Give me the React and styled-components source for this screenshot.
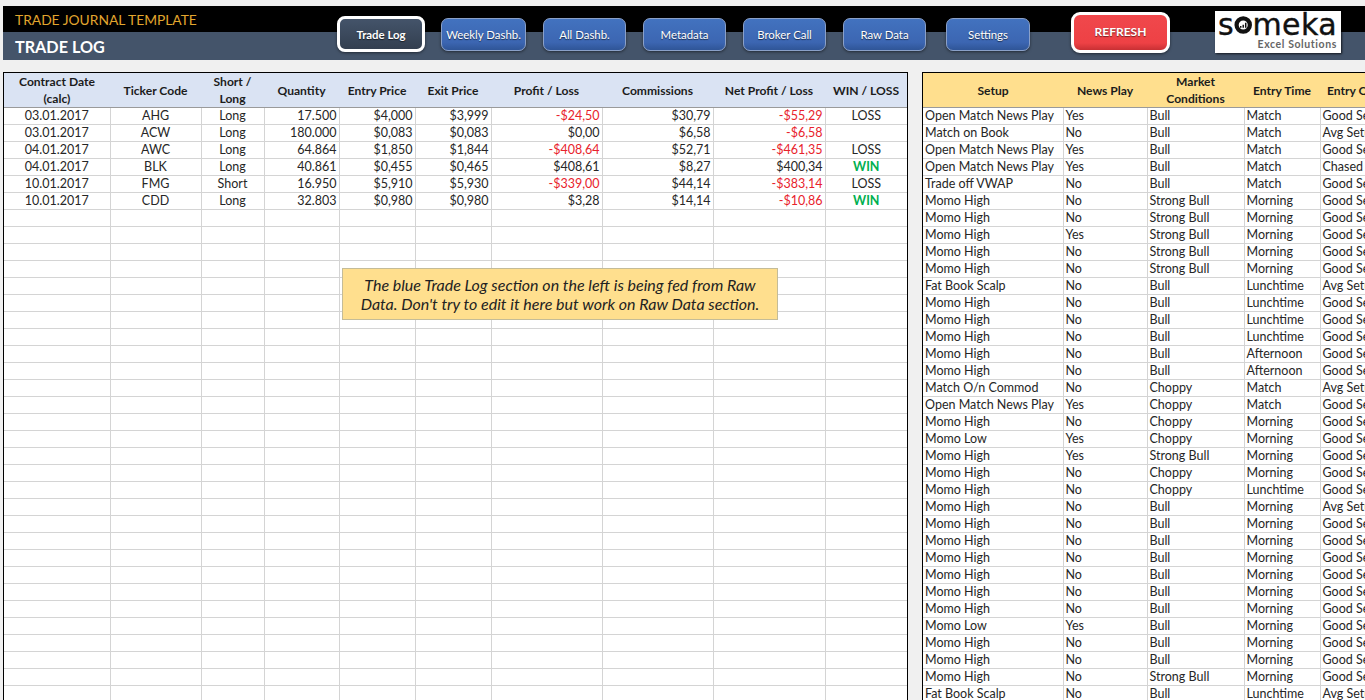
import React from "react";
import styled, { createGlobalStyle } from "styled-components";

const GlobalStyle = createGlobalStyle`
  html, body {
    margin: 0;
    height: 100%;
    overflow: hidden;
    background: #f0f0f0;
    font-family: Lato, "Open Sans", "Liberation Sans", sans-serif;
  }
`;

const Page = styled.div`
  width: 1365px;
  height: 700px;
  padding: 6px 0 0 3px;
  box-sizing: border-box;
  overflow: hidden;
`;

const Header = styled.header`
  display: flex;
  height: 54px;
  background: linear-gradient(#000 0 26px, #44546a 26px);
`;

const TitleBlock = styled.div`
  width: 322px;
  padding-left: 12px;
`;

const Template = styled.div`
  height: 26px;
  line-height: 28px;
  font-size: 13.8px;
  color: #e2a62e;
  white-space: nowrap;
`;

const PageTitle = styled.div`
  height: 28px;
  line-height: 30px;
  font-size: 16.2px;
  font-weight: 700;
  color: #fff;
`;

const Nav = styled.nav`
  display: flex;
  align-items: center;
  align-self: flex-start;
  gap: 17px;
  height: 36px;
  margin-top: 10px;
`;

const NavButton = styled.button`
  box-sizing: border-box;
  width: ${(p) => p.$width || 83}px;
  height: ${(p) => (p.$active ? 36 : 33)}px;
  margin-left: ${(p) => p.$shift || 0}px;
  margin-right: ${(p) => (p.$active ? -1 : 0)}px;
  padding: 0;
  border: ${(p) => (p.$active ? "3px solid #fff" : "1px solid #8aa0c8")};
  border-radius: ${(p) => (p.$active ? 8 : 7)}px;
  background: ${(p) =>
    p.$active
      ? "linear-gradient(#44546a, #333f50)"
      : "linear-gradient(#4272bf, #3c66b2 75%, #2f5597)"};
  box-shadow: 0 1px 3px rgba(0, 0, 0, 0.5);
  color: #fff;
  font-family: inherit;
  font-size: 11.4px;
  font-weight: ${(p) => (p.$active ? 700 : 400)};
  text-shadow: 0 1px 1px rgba(0, 0, 0, 0.6);
  white-space: nowrap;
`;

const RefreshButton = styled.button`
  box-sizing: border-box;
  flex: none;
  width: 99px;
  height: 41px;
  margin: 6px 0 0 41px;
  padding: 0 0 2px;
  border: 3px solid #fff;
  border-radius: 9px;
  background: linear-gradient(#f0484c, #ee4145 80%, #c83034);
  box-shadow: 0 1px 3px rgba(0, 0, 0, 0.5);
  color: #fff;
  font-family: inherit;
  font-size: 12px;
  font-weight: 700;
  text-shadow: 0 1px 1px rgba(0, 0, 0, 0.5);
`;

const Logo = styled.div`
  box-sizing: border-box;
  flex: none;
  width: 126px;
  height: 42px;
  margin: 5px 0 0 45px;
  padding-right: 4px;
  background: #fff;
  box-shadow: 1px 1px 2px rgba(0, 0, 0, 0.7);
  text-align: right;
`;

const LogoMark = styled.div`
  display: flex;
  align-items: center;
  justify-content: center;
  height: 27px;
  padding-left: 3px;
  font-family: "DejaVu Sans", sans-serif;
  font-size: 30px;
  line-height: 27px;
  letter-spacing: 0.4px;
  -webkit-text-stroke: 0.4px #111;
  color: #111;
`;

const LogoSub = styled.div`
  font-size: 10.5px;
  font-weight: 700;
  line-height: 13px;
  letter-spacing: 0.6px;
  color: #666;
`;

const Sheets = styled.main`
  display: flex;
  gap: 14px;
  margin-top: 12px;
`;

const LeftPane = styled.section`
  position: relative;
  flex: none;
  box-sizing: border-box;
  width: 905px;
  height: 640px;
  border: solid #000;
  border-width: 1px 1px 0 1px;
  background: #fff;
`;

const RightPane = styled.section`
  flex: 1;
  min-width: 0;
  height: 640px;
  border: solid #000;
  border-width: 1px 0 0 1px;
  background: #fff;
  overflow: hidden;
`;

const Table = styled.table`
  table-layout: fixed;
  width: ${(p) => p.$width}px;
  border-collapse: collapse;
  color: #262626;
  font-size: 12.5px;
`;

const HeadCell = styled.th`
  height: 34px;
  padding: 0 1px;
  border-bottom: 1px solid #9a9a9a;
  background: ${(p) => p.$bg};
  font-size: 12.1px;
  font-weight: 700;
  line-height: 17px;
  text-align: center;
  color: #1c1c1c;
`;

const Cell = styled.td`
  box-sizing: border-box;
  height: 17px;
  padding: 0 2px;
  border: 1px solid #d4d4d4;
  border-top: 0;
  line-height: 16px;
  text-align: ${(p) => p.$align || "left"};
  color: ${(p) => p.$color || "inherit"};
  font-weight: ${(p) => (p.$bold ? 700 : 400)};
  white-space: nowrap;
  overflow: hidden;
  &:first-child {
    border-left: 0;
  }
  &:last-child {
    border-right: 0;
  }
`;

const Note = styled.aside`
  position: absolute;
  left: 338px;
  top: 195px;
  box-sizing: border-box;
  width: 436px;
  height: 52px;
  padding-top: 6px;
  border: 1px solid #c4bc98;
  background: #ffdf8e;
  font-size: 16px;
  font-style: italic;
  line-height: 19px;
  text-align: center;
  color: #222;
`;

const RED = "#e8222c";
const GREEN = "#00b050";

const leftCols = [106, 91, 63, 75, 76, 76, 111, 111, 112, 82];
const leftHead = [
  ["Contract Date", "(calc)"],
  ["Ticker Code"],
  ["Short /", "Long"],
  ["Quantity"],
  ["Entry Price"],
  ["Exit Price"],
  ["Profit / Loss"],
  ["Commissions"],
  ["Net Profit / Loss"],
  ["WIN / LOSS"],
];
const trades = [
  ["03.01.2017", "AHG", "Long", "17.500", "$4,000", "$3,999", "-$24,50", "$30,79", "-$55,29", "LOSS"],
  ["03.01.2017", "ACW", "Long", "180.000", "$0,083", "$0,083", "$0,00", "$6,58", "-$6,58", ""],
  ["04.01.2017", "AWC", "Long", "64.864", "$1,850", "$1,844", "-$408,64", "$52,71", "-$461,35", "LOSS"],
  ["04.01.2017", "BLK", "Long", "40.861", "$0,455", "$0,465", "$408,61", "$8,27", "$400,34", "WIN"],
  ["10.01.2017", "FMG", "Short", "16.950", "$5,910", "$5,930", "-$339,00", "$44,14", "-$383,14", "LOSS"],
  ["10.01.2017", "CDD", "Long", "32.803", "$0,980", "$0,980", "$3,28", "$14,14", "-$10,86", "WIN"],
];

const rightCols = [140, 84, 97, 76, 85];
const rightHead = [["Setup"], ["News Play"], ["Market", "Conditions"], ["Entry Time"], ["Entry Quality"]];

const OPEN = "Open Match News Play";
const HIGH = "Momo High";
const LOW = "Momo Low";
const FAT = "Fat Book Scalp";
const GOOD = "Good Setup";
const AVG = "Avg Setup";
const setups = [
  [OPEN, "Yes", "Bull", "Match", GOOD],
  ["Match on Book", "No", "Bull", "Match", AVG],
  [OPEN, "Yes", "Bull", "Match", GOOD],
  [OPEN, "Yes", "Bull", "Match", "Chased"],
  ["Trade off VWAP", "No", "Bull", "Match", GOOD],
  [HIGH, "No", "Strong Bull", "Morning", GOOD],
  [HIGH, "No", "Strong Bull", "Morning", GOOD],
  [HIGH, "Yes", "Strong Bull", "Morning", GOOD],
  [HIGH, "No", "Strong Bull", "Morning", GOOD],
  [HIGH, "No", "Strong Bull", "Morning", GOOD],
  [FAT, "No", "Bull", "Lunchtime", AVG],
  [HIGH, "No", "Bull", "Lunchtime", GOOD],
  [HIGH, "No", "Bull", "Lunchtime", GOOD],
  [HIGH, "No", "Bull", "Lunchtime", GOOD],
  [HIGH, "No", "Bull", "Afternoon", GOOD],
  [HIGH, "No", "Bull", "Afternoon", GOOD],
  ["Match O/n Commod", "No", "Choppy", "Match", AVG],
  [OPEN, "Yes", "Choppy", "Match", GOOD],
  [HIGH, "No", "Choppy", "Morning", GOOD],
  [LOW, "Yes", "Choppy", "Morning", GOOD],
  [HIGH, "Yes", "Strong Bull", "Morning", GOOD],
  [HIGH, "No", "Choppy", "Morning", GOOD],
  [HIGH, "No", "Choppy", "Lunchtime", GOOD],
  [HIGH, "No", "Bull", "Morning", AVG],
  [HIGH, "No", "Bull", "Morning", GOOD],
  [HIGH, "No", "Bull", "Morning", GOOD],
  [HIGH, "No", "Bull", "Morning", GOOD],
  [HIGH, "No", "Bull", "Morning", GOOD],
  [HIGH, "No", "Bull", "Morning", GOOD],
  [HIGH, "No", "Bull", "Morning", GOOD],
  [LOW, "Yes", "Bull", "Morning", GOOD],
  [HIGH, "No", "Bull", "Morning", GOOD],
  [HIGH, "No", "Bull", "Morning", GOOD],
  [HIGH, "No", "Strong Bull", "Morning", GOOD],
  [FAT, "No", "Bull", "Lunchtime", AVG],
];

const ROW_COUNT = 35;
const leftAlign = ["center", "center", "center", "right", "right", "right", "right", "right", "right", "center"];

function sum(list) {
  return list.reduce((a, b) => a + b, 0);
}

function HeadRow({ labels, bg }) {
  return (
    <tr>
      {labels.map((lines) => (
        <HeadCell key={lines[0]} $bg={bg}>
          {lines.map((line) => (
            <div key={line}>{line}</div>
          ))}
        </HeadCell>
      ))}
    </tr>
  );
}

function tradeCellProps(value, col) {
  if ((col === 6 || col === 8) && value.startsWith("-")) return { $color: RED };
  if (col === 9 && value === "WIN") return { $color: GREEN, $bold: true };
  return {};
}

function LogoO() {
  return (
    <svg width="20" height="20" viewBox="0 0 20 20" aria-hidden="true">
      <circle cx="10" cy="10" r="7.2" fill="none" stroke="#111" strokeWidth="4.6" />
      <path d="M6.5 13v-2h1.6v2zM9.2 13V9.6h1.6V13zM11.9 13V7.5h1.6V13z" fill="#111" />
    </svg>
  );
}

export default function App() {
  const blanks = Array.from({ length: ROW_COUNT - trades.length });

  return (
    <Page>
      <GlobalStyle />
      <Header>
        <TitleBlock>
          <Template>TRADE JOURNAL TEMPLATE</Template>
          <PageTitle>TRADE LOG</PageTitle>
        </TitleBlock>
        <Nav>
          <NavButton $active $width={88}>Trade Log</NavButton>
          <NavButton $width={85}>Weekly Dashb.</NavButton>
          <NavButton>All Dashb.</NavButton>
          <NavButton>Metadata</NavButton>
          <NavButton>Broker Call</NavButton>
          <NavButton>Raw Data</NavButton>
          <NavButton $width={84} $shift={3}>Settings</NavButton>
        </Nav>
        <RefreshButton>REFRESH</RefreshButton>
        <Logo>
          <LogoMark>
            s<LogoO />meka
          </LogoMark>
          <LogoSub>Excel Solutions</LogoSub>
        </Logo>
      </Header>

      <Sheets>
        <LeftPane>
          <Table $width={sum(leftCols)}>
            <colgroup>
              {leftCols.map((w, i) => (
                <col key={i} width={w} />
              ))}
            </colgroup>
            <thead>
              <HeadRow labels={leftHead} bg="#dae3f3" />
            </thead>
            <tbody>
              {trades.map((row, r) => (
                <tr key={r}>
                  {row.map((value, c) => (
                    <Cell key={c} $align={leftAlign[c]} {...tradeCellProps(value, c)}>
                      {value}
                    </Cell>
                  ))}
                </tr>
              ))}
              {blanks.map((_, r) => (
                <tr key={r}>
                  {leftCols.map((w, c) => (
                    <Cell key={c} />
                  ))}
                </tr>
              ))}
            </tbody>
          </Table>
          <Note>
            The blue Trade Log section on the left is being fed from Raw
            <br />
            Data. Don't try to edit it here but work on Raw Data section.
          </Note>
        </LeftPane>

        <RightPane>
          <Table $width={sum(rightCols)}>
            <colgroup>
              {rightCols.map((w, i) => (
                <col key={i} width={w} />
              ))}
            </colgroup>
            <thead>
              <HeadRow labels={rightHead} bg="#ffdf8e" />
            </thead>
            <tbody>
              {setups.map((row, r) => (
                <tr key={r}>
                  {row.map((value, c) => (
                    <Cell key={c}>{value}</Cell>
                  ))}
                </tr>
              ))}
            </tbody>
          </Table>
        </RightPane>
      </Sheets>
    </Page>
  );
}
